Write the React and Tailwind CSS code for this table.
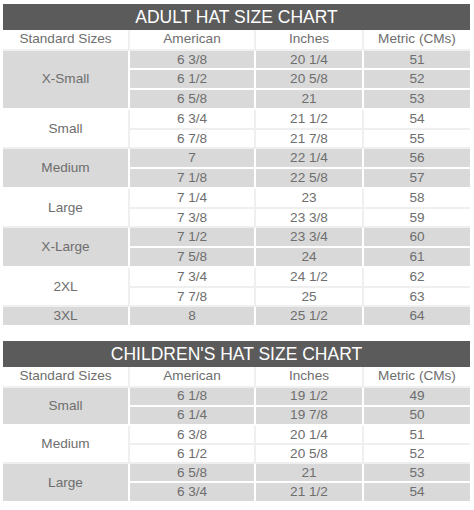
import React from "react";

const adult = [
  { size: "X-Small", gray: true, rows: [["6 3/8", "20 1/4", "51"], ["6 1/2", "20 5/8", "52"], ["6 5/8", "21", "53"]] },
  { size: "Small", gray: false, rows: [["6 3/4", "21 1/2", "54"], ["6 7/8", "21 7/8", "55"]] },
  { size: "Medium", gray: true, rows: [["7", "22 1/4", "56"], ["7 1/8", "22 5/8", "57"]] },
  { size: "Large", gray: false, rows: [["7 1/4", "23", "58"], ["7 3/8", "23 3/8", "59"]] },
  { size: "X-Large", gray: true, rows: [["7 1/2", "23 3/4", "60"], ["7 5/8", "24", "61"]] },
  { size: "2XL", gray: false, rows: [["7 3/4", "24 1/2", "62"], ["7 7/8", "25", "63"]] },
  { size: "3XL", gray: true, rows: [["8", "25 1/2", "64"]] },
];

const kids = [
  { size: "Small", gray: true, rows: [["6 1/8", "19 1/2", "49"], ["6 1/4", "19 7/8", "50"]] },
  { size: "Medium", gray: false, rows: [["6 3/8", "20 1/4", "51"], ["6 1/2", "20 5/8", "52"]] },
  { size: "Large", gray: true, rows: [["6 5/8", "21", "53"], ["6 3/4", "21 1/2", "54"]] },
];

function Chart({ title, groups, rowH }) {
  return (
    <div className="w-[467px]">
      <div className="h-[26px] bg-[#5b5b5b] text-white text-[17.5px] leading-none flex items-center justify-center pt-[1px]">
        {title}
      </div>
      <table className="w-full table-fixed border-collapse text-[13.6px] text-[#6e6e6e] text-center">
        <colgroup>
          <col className="w-[126px]" />
          <col className="w-[126px]" />
          <col className="w-[108px]" />
          <col className="w-[107px]" />
        </colgroup>
        <tbody>
          <tr className="h-[19.5px] bg-white">
            <td className="border-2 border-[#f0f0f0] border-t-0 border-l-0 p-0 leading-none">Standard Sizes</td>
            <td className="border-2 border-[#f0f0f0] border-t-0 p-0 leading-none">American</td>
            <td className="border-2 border-[#f0f0f0] border-t-0 p-0 leading-none">Inches</td>
            <td className="border-2 border-[#f0f0f0] border-t-0 border-r-0 p-0 leading-none">Metric (CMs)</td>
          </tr>
          {groups.map((g) =>
            g.rows.map((r, i) => {
              const cell = g.gray
                ? "bg-[#d9d9d9] border-2 border-white p-0 leading-none"
                : "bg-white border-2 border-[#efefef] p-0 leading-none";
              return (
                <tr key={g.size + i} className={rowH}>
                  {i === 0 && (
                    <td rowSpan={g.rows.length} className={cell + " border-l-0"}>
                      {g.size}
                    </td>
                  )}
                  <td className={cell}>{r[0]}</td>
                  <td className={cell}>{r[1]}</td>
                  <td className={cell + " border-r-0"}>{r[2]}</td>
                </tr>
              );
            })
          )}
        </tbody>
      </table>
    </div>
  );
}

export default function App() {
  return (
    <div
      className="w-[474px] h-[510px] bg-white pl-[3px] pt-[4px] overflow-hidden"
      style={{ fontFamily: '"Liberation Sans", Arial, sans-serif' }}
    >
      <Chart title="ADULT HAT SIZE CHART" groups={adult} rowH="h-[19.75px]" />
      <div className="h-[14px]" />
      <Chart title="CHILDREN'S HAT SIZE CHART" groups={kids} rowH="h-[19.2px]" />
    </div>
  );
}
